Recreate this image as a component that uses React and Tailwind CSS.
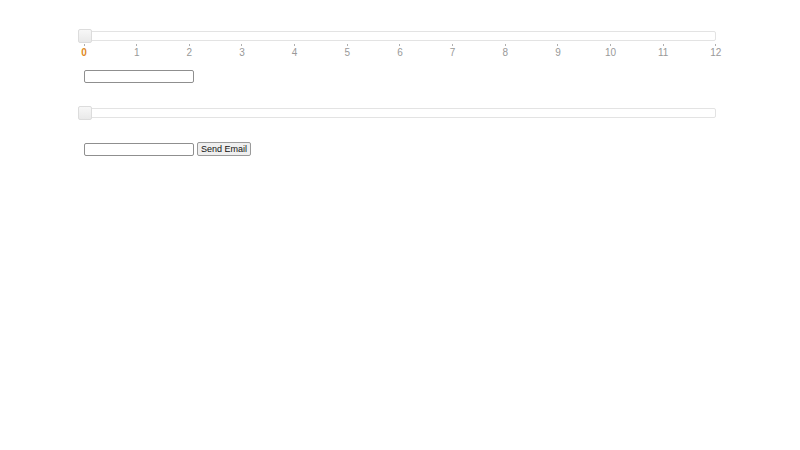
import React from "react"

const ticks = [0, 1, 2, 3, 4, 5, 6, 7, 8, 9, 10, 11, 12]

function Slider({ withTicks }) {
  return (
    <div className="w-[632px]">
      <div className="relative h-[10px] rounded-[2px] border border-[#e3e3e3] bg-white">
        <div className="absolute left-[-7px] top-[-3px] h-[14px] w-[14px] rounded-[2px] border border-[#dcdcdc] bg-gradient-to-b from-[#f7f7f7] to-[#e9e9e9]" />
      </div>
      {withTicks && (
        <div className="mt-[3px] flex justify-between">
          {ticks.map((t) => (
            <div key={t} className="flex w-0 flex-col items-center">
              <div className="h-[2px] w-px bg-[#b0b0b0]" />
              <span
                className={
                  t === 0
                    ? "mt-[1px] text-[10px] font-bold leading-[11px] text-[#e08a1e]"
                    : "mt-[1px] text-[10px] leading-[11px] text-[#999]"
                }
              >
                {t}
              </span>
            </div>
          ))}
        </div>
      )}
    </div>
  )
}

export default function App() {
  return (
    <div className="h-[450px] w-[800px] bg-white pl-[84px] pt-[31px] font-['Liberation_Sans',Arial,sans-serif]">
      <Slider withTicks />
      <input
        type="text"
        className="mt-[12px] block h-[13px] w-[110px] rounded-[2px] border border-[#8f8f8f] bg-white"
      />
      <div className="mt-[25px]">
        <Slider />
      </div>
      <div className="mt-[24px] flex items-center gap-[3px]">
        <input
          type="text"
          className="h-[13px] w-[110px] rounded-[2px] border border-[#8f8f8f] bg-white"
        />
        <button className="h-[14px] rounded-[2px] border border-[#9a9a9a] bg-[#efefef] px-[3px] text-[9px] font-normal leading-[12px] text-[#111]">
          Send Email
        </button>
      </div>
    </div>
  )
}
